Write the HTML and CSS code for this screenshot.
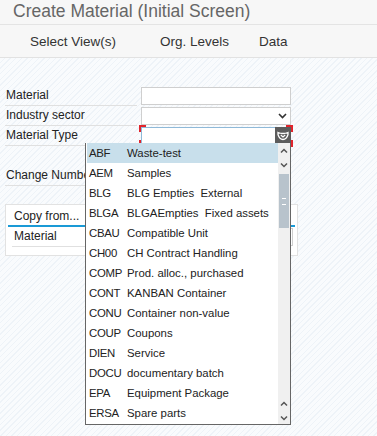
FILE: index.html
```html
<!DOCTYPE html>
<html lang="en">
<head>
    <meta charset="UTF-8" />
    <title>Create Material (Initial Screen)</title>
    <link rel="stylesheet" href="styles.css">
</head>
<body>

<div class="title-bar">Create Material (Initial Screen)</div>

<div class="tool-bar">
    <span class="tool-btn">Select View(s)</span>
    <span class="tool-btn">Org. Levels</span>
    <span class="tool-btn">Data</span>
</div>

<div class="screen">
    <div class="form">
        <div class="form-row">
            <div class="form-label">Material</div>
            <div class="field"></div>
        </div>
        <div class="form-row">
            <div class="form-label">Industry sector</div>
            <div class="field">
                <svg class="chev" width="9" height="6" viewBox="0 0 9 6"><path d="M1 1 L4.5 4.5 L8 1" fill="none" stroke="#333" stroke-width="1.6"/></svg>
            </div>
        </div>
        <div class="form-row">
            <div class="form-label">Material Type</div>
            <div class="field field-focus">
                <span class="f-btn">
                    <svg width="12" height="10" viewBox="0 0 12 10"><path d="M1 1.5 Q6 3.5 11 1.5 L11 3.5 Q9.5 8.5 6 8.5 Q2.5 8.5 1 3.5 Z" fill="none" stroke="#fff" stroke-width="1.3"/><path d="M3.8 4 L6 6 L8.2 4" fill="none" stroke="#fff" stroke-width="1.2"/></svg>
                </span>
                <span class="corner c-tl"></span>
                <span class="corner c-tr"></span>
                <span class="corner c-bl"></span>
                <span class="corner c-br"></span>
            </div>
        </div>
        <div class="form-row row-gap">
            <div class="form-label"><span class="clip">Change Number</span></div>
            <div class="field"></div>
        </div>

        <div class="group-box">
            <div class="group-title">Copy from...</div>
            <div class="form-row">
                <div class="form-label inner">Material</div>
                <div class="field"></div>
            </div>
        </div>
    </div>

    <div class="dropdown">
        <div class="dd-list">
            <div class="dd-item selected"><span class="code">ABF</span>Waste-test</div>
            <div class="dd-item"><span class="code">AEM</span>Samples</div>
            <div class="dd-item"><span class="code">BLG</span>BLG Empties&nbsp;&nbsp;External</div>
            <div class="dd-item"><span class="code">BLGA</span>BLGAEmpties&nbsp;&nbsp;Fixed assets</div>
            <div class="dd-item"><span class="code">CBAU</span>Compatible Unit</div>
            <div class="dd-item"><span class="code">CH00</span>CH Contract Handling</div>
            <div class="dd-item"><span class="code">COMP</span>Prod. alloc., purchased</div>
            <div class="dd-item"><span class="code">CONT</span>KANBAN Container</div>
            <div class="dd-item"><span class="code">CONU</span>Container non-value</div>
            <div class="dd-item"><span class="code">COUP</span>Coupons</div>
            <div class="dd-item"><span class="code">DIEN</span>Service</div>
            <div class="dd-item"><span class="code">DOCU</span>documentary batch</div>
            <div class="dd-item"><span class="code">EPA</span>Equipment Package</div>
            <div class="dd-item"><span class="code">ERSA</span>Spare parts</div>
        </div>
        <div class="scroll">
            <svg class="arrow" width="8" height="6" viewBox="0 0 8 6"><path d="M1 4.5 L4 1.5 L7 4.5" fill="none" stroke="#555" stroke-width="1.5"/></svg>
            <svg class="arrow" width="8" height="6" viewBox="0 0 8 6"><path d="M1 1.5 L4 4.5 L7 1.5" fill="none" stroke="#555" stroke-width="1.5"/></svg>
            <div class="thumb"><span class="grip"></span></div>
            <div class="scroll-space"></div>
            <svg class="arrow" width="8" height="6" viewBox="0 0 8 6"><path d="M1 4.5 L4 1.5 L7 4.5" fill="none" stroke="#555" stroke-width="1.5"/></svg>
            <svg class="arrow" width="8" height="6" viewBox="0 0 8 6"><path d="M1 1.5 L4 4.5 L7 1.5" fill="none" stroke="#555" stroke-width="1.5"/></svg>
        </div>
    </div>
</div>

</body>
</html>
```

FILE: styles.css
```css
body {
    margin: 0;
    font-family: "Liberation Sans", Arial, sans-serif;
    color: #222;
    width: 377px;
    height: 436px;
    overflow: hidden;
    background: #f7f7f7;
}

.title-bar {
    height: 24px;
    line-height: 22px;
    padding-left: 13px;
    font-size: 17.5px;
    color: #666;
    background: #f7f7f7;
    border-bottom: 1px solid #e4e4e4;
}

.tool-bar {
    height: 32px;
    display: flex;
    align-items: center;
    background: #f7f7f7;
    border-bottom: 1px solid #e2e2e2;
    font-size: 13.5px;
    color: #333;
}

.tool-btn:nth-child(1) {
    margin-left: 30px;
}

.tool-btn:nth-child(2) {
    margin-left: 44px;
}

.tool-btn:nth-child(3) {
    margin-left: 30px;
}

.screen {
    position: relative;
    height: 378px;
    background: repeating-linear-gradient(135deg, #f9fbfd 0, #f9fbfd 3px, #eef3f8 3px, #eef3f8 4px);
}

.form {
    padding-top: 28px;
    padding-left: 5px;
}

.form-row {
    display: flex;
    align-items: center;
    height: 20px;
}

.row-gap {
    margin-top: 20px;
}

.form-label {
    width: 131px;
    height: 19px;
    line-height: 19px;
    padding-left: 1px;
    margin-right: 4px;
    font-size: 12px;
    color: #222;
    border-bottom: 1px solid #e0e0e0;
}

.clip {
    display: block;
    width: 79px;
    overflow: hidden;
    white-space: nowrap;
}

.field {
    position: relative;
    width: 148px;
    height: 16px;
    background: #fff;
    border: 1px solid #cfcfcf;
    display: flex;
    align-items: center;
    justify-content: flex-end;
}

.chev {
    margin-right: 3px;
}

.field-focus {
    border-color: #8fb9d8;
}

.f-btn {
    width: 16px;
    height: 18px;
    margin-right: -1px;
    background: #5c5c5c;
    display: flex;
    align-items: center;
    justify-content: center;
}

.corner {
    position: absolute;
    width: 5px;
    height: 5px;
    border-color: #e0242c;
    border-style: solid;
    border-width: 0;
}

.c-tl { left: -3px; top: -3px; border-left-width: 2px; border-top-width: 2px; }
.c-tr { right: -3px; top: -3px; border-right-width: 2px; border-top-width: 2px; }
.c-bl { left: -3px; bottom: -3px; border-left-width: 2px; border-bottom-width: 2px; }
.c-br { right: -3px; bottom: -3px; border-right-width: 2px; border-bottom-width: 2px; }

.group-box {
    margin-top: 18px;
    width: 293px;
    height: 52px;
    background: #fff;
    border: 1px solid #e2e2e2;
    box-sizing: border-box;
}

.group-title {
    margin: 2px 2px 0 2px;
    height: 18px;
    line-height: 18px;
    padding-left: 6px;
    font-size: 12px;
    color: #222;
    border-bottom: 2px solid #1a9ad6;
}

.form-label.inner {
    width: 125px;
    margin-left: 6px;
    padding-left: 2px;
}

.dropdown {
    position: absolute;
    left: 85px;
    top: 85px;
    width: 204px;
    height: 281px;
    background: #fff;
    border: 1px solid #666;
    border-top: none;
    display: flex;
}

.dd-list {
    flex: 1;
    padding-left: 1px;
}

.dd-item {
    height: 20px;
    line-height: 20px;
    font-size: 11.4px;
    color: #222;
    white-space: nowrap;
    padding-left: 2px;
}

.dd-item.selected {
    background: #c8dfeb;
}

.code {
    display: inline-block;
    width: 38px;
    letter-spacing: -0.3px;
}

.scroll {
    width: 12px;
    background: #f0f0f0;
    display: flex;
    flex-direction: column;
    align-items: center;
}

.arrow {
    margin-top: 5px;
    margin-bottom: 3px;
}

.thumb {
    width: 10px;
    height: 54px;
    margin-top: 3px;
    background: #b8c3cc;
    display: flex;
    align-items: center;
    justify-content: center;
}

.grip {
    width: 4px;
    height: 5px;
    border-top: 1px solid #fff;
    border-bottom: 1px solid #fff;
}

.scroll-space {
    flex: 1;
}
```
